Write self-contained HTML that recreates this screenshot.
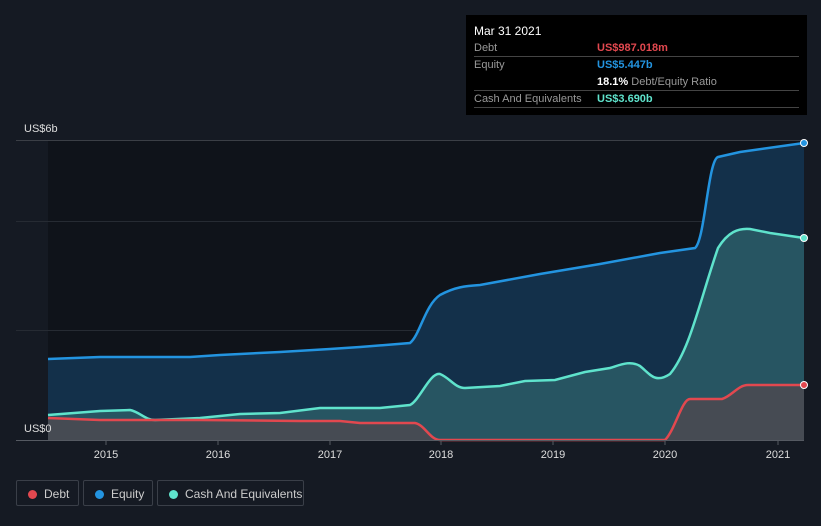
<!DOCTYPE html>
<html><head><style>
body{margin:0;background:#151a23;width:821px;height:526px;overflow:hidden;font-family:"Liberation Sans",sans-serif;position:relative}
.tt{position:absolute;left:466px;top:15px;width:341px;height:100px;background:#000;color:#fff;font-size:11px}
.tt .r{position:absolute;left:8px;right:8px;border-bottom:1px solid #444;height:16px;line-height:16px}
.lab{color:#999}
.leg{position:absolute;top:480px;height:26px;border:1px solid #3a3f48;border-radius:2px;color:#ccc;font-size:12px;line-height:26px;box-sizing:border-box}
.leg i{position:absolute;left:11px;top:9px;width:9px;height:9px;border-radius:50%}
.leg span{position:absolute;left:27px}
</style></head><body>
<svg width="821" height="526" style="position:absolute;left:0;top:0">
<rect x="48" y="140" width="756" height="300" fill="#0f131a"/>
<line x1="16" y1="140.5" x2="804" y2="140.5" stroke="#3b3f46"/>
<line x1="16" y1="221.5" x2="804" y2="221.5" stroke="#262b33"/>
<line x1="16" y1="330.5" x2="804" y2="330.5" stroke="#262b33"/>
<path d="M48,359 L100,357 L190,357 L220,355 L280,352 L330,349 L360,347 L410,343 C420,335 425,305 440,295 C455,287 465,286 480,285 L540,274 L600,264 L660,253 L695,248 C705,240 708,160 718,157 L740,152 L804,143 L804,440 L48,440Z" fill="#13304a"/>
<path d="M48,415 L100,411 L130,410 C140,412 145,420 155,420 L200,418 L240,414 L280,413 L320,408 L380,408 L410,405 C420,400 430,372 440,374 C450,378 455,388 465,388 L500,386 L525,381 L555,380 L585,372 L610,368 C620,365 630,360 640,366 C650,374 655,384 670,374 C690,350 700,300 718,248 C728,232 738,228 750,229 L770,233 L804,238 L804,440 L48,440Z" fill="#2c5c66" opacity="0.85"/>
<path d="M48,418 L100,420 L200,420 L300,421 L340,421 L360,423 L415,423 C425,425 430,440 440,440 L665,440 C675,430 682,399 690,399 L722,399 C732,396 738,385 748,385 L804,385 L804,440 L48,440Z" fill="#4a4a52" opacity="0.9"/>
<path d="M48,359 L100,357 L190,357 L220,355 L280,352 L330,349 L360,347 L410,343 C420,335 425,305 440,295 C455,287 465,286 480,285 L540,274 L600,264 L660,253 L695,248 C705,240 708,160 718,157 L740,152 L804,143" fill="none" stroke="#2394e0" stroke-width="2.5"/>
<path d="M48,415 L100,411 L130,410 C140,412 145,420 155,420 L200,418 L240,414 L280,413 L320,408 L380,408 L410,405 C420,400 430,372 440,374 C450,378 455,388 465,388 L500,386 L525,381 L555,380 L585,372 L610,368 C620,365 630,360 640,366 C650,374 655,384 670,374 C690,350 700,300 718,248 C728,232 738,228 750,229 L770,233 L804,238" fill="none" stroke="#5fe3cc" stroke-width="2.5"/>
<path d="M48,418 L100,420 L200,420 L300,421 L340,421 L360,423 L415,423 C425,425 430,440 440,440 L665,440 C675,430 682,399 690,399 L722,399 C732,396 738,385 748,385 L804,385" fill="none" stroke="#e2484f" stroke-width="2.5"/>
<circle cx="804" cy="143" r="3.5" fill="#2394e0" stroke="#fff"/>
<circle cx="804" cy="238" r="3.5" fill="#5fe3cc" stroke="#fff"/>
<circle cx="804" cy="385" r="3.5" fill="#e2484f" stroke="#fff"/>
<line x1="16" y1="440.5" x2="804" y2="440.5" stroke="#555a62"/>
<g stroke="#555a62"><line x1="106" y1="441" x2="106" y2="445"/><line x1="218" y1="441" x2="218" y2="445"/><line x1="330" y1="441" x2="330" y2="445"/><line x1="441" y1="441" x2="441" y2="445"/><line x1="553" y1="441" x2="553" y2="445"/><line x1="665" y1="441" x2="665" y2="445"/><line x1="778" y1="441" x2="778" y2="445"/></g>
<g fill="#ddd" font-size="11" text-anchor="middle" font-family="Liberation Sans"><text x="106" y="458">2015</text><text x="218" y="458">2016</text><text x="330" y="458">2017</text><text x="441" y="458">2018</text><text x="553" y="458">2019</text><text x="665" y="458">2020</text><text x="778" y="458">2021</text></g>
<text x="24" y="132" fill="#ddd" font-size="11">US$6b</text>
<text x="24" y="432" fill="#ddd" font-size="11">US$0</text>
</svg>
<div class="tt">
<div style="position:absolute;left:8px;top:9px;font-size:12px">Mar 31 2021</div>
<div class="r" style="top:25px"><span class="lab">Debt</span><span style="position:absolute;left:123px;color:#e2484f;font-weight:bold">US$987.018m</span></div>
<div class="r" style="top:42px;border:none"><span class="lab">Equity</span><span style="position:absolute;left:123px;color:#2394e0;font-weight:bold">US$5.447b</span></div>
<div class="r" style="top:59px"><span style="position:absolute;left:123px"><b>18.1%</b> <span class="lab">Debt/Equity Ratio</span></span></div>
<div class="r" style="top:76px"><span class="lab">Cash And Equivalents</span><span style="position:absolute;left:123px;color:#5fe3cc;font-weight:bold">US$3.690b</span></div>
</div>
<div class="leg" style="left:16px;width:63px"><i style="background:#e2484f"></i><span>Debt</span></div>
<div class="leg" style="left:83px;width:70px"><i style="background:#2394e0"></i><span>Equity</span></div>
<div class="leg" style="left:157px;width:147px"><i style="background:#5fe3cc"></i><span>Cash And Equivalents</span></div>
</body></html>
